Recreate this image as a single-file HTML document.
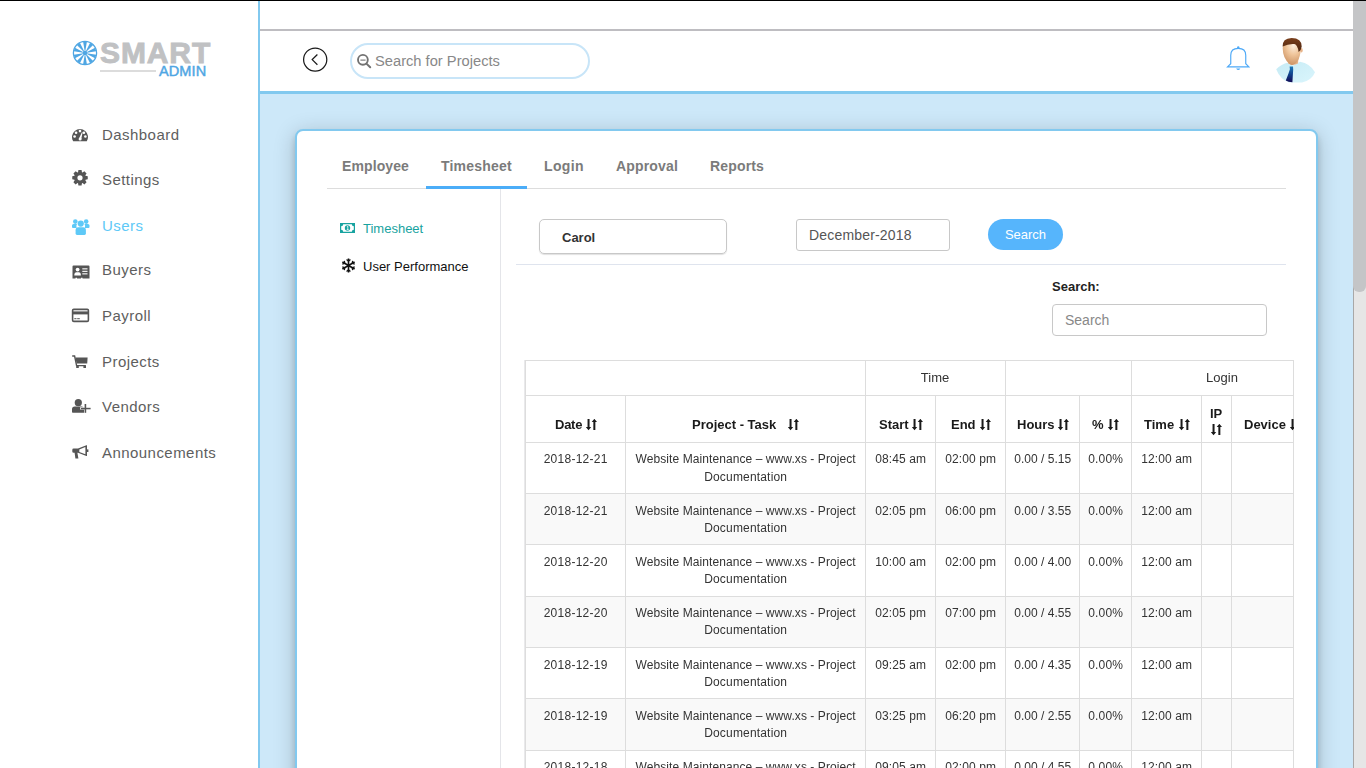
<!DOCTYPE html>
<html><head><meta charset="utf-8">
<style>
*{box-sizing:border-box;margin:0;padding:0}
html,body{width:1366px;height:768px;overflow:hidden;background:#fff;font-family:"Liberation Sans",sans-serif;color:#333}
.abs{position:absolute}
#topline{left:0;top:0;width:1366px;height:1px;background:#000}
#sb-track{left:1353px;top:1px;width:13px;height:767px;background:#e6e6e6;border-left:1px solid #a8a8a8}
#sb-thumb{left:1353px;top:1px;width:13px;height:291px;background:#c4c5c7;border-radius:0 0 6px 6px}
#sidebar{left:0;top:1px;width:258px;height:767px;background:#fff}
#sideline{left:258px;top:1px;width:2px;height:767px;background:#82c9ef}
#header{left:260px;top:1px;width:1093px;height:90px;background:#fff}
#hgray{left:260px;top:29px;width:1093px;height:2px;background:#bebdc1}
#hblue{left:260px;top:91px;width:1093px;height:3px;background:#82c9ef}
#mainbg{left:260px;top:94px;width:1093px;height:674px;background:#cde8f9}
#card{left:295px;top:129px;width:1023px;height:700px;background:#fff;border:2px solid #82c9ef;border-radius:8px;box-shadow:0 4px 22px rgba(0,0,0,.2),0 5px 6px rgba(0,0,0,.16)}
.menu{left:102px;font-size:15px;line-height:20px;color:#5e5e5e;letter-spacing:.45px;white-space:nowrap}

#smart{left:100px;top:35px;font-size:30px;font-weight:bold;color:#c0c1c3;letter-spacing:0.9px;line-height:36px;-webkit-text-stroke:0.9px #c0c1c3}
#logoline{left:100px;top:70px;width:56px;height:2px;background:#dcdcdc}
#admin{left:159px;top:63px;font-size:14.5px;color:#4fa6e3;line-height:16px;letter-spacing:0.1px;-webkit-text-stroke:0.45px #4fa6e3}
.menu.act{color:#5ec9f7}

#psearch{left:350px;top:43px;width:240px;height:36px;border:2px solid #c8e5f8;border-radius:18px;background:#fff}
#psearch-txt{left:375px;top:51px;font-size:14.7px;line-height:20px;color:#888;white-space:nowrap}

.tab{top:157px;font-size:14px;font-weight:bold;color:#7b7b7b;line-height:18px;white-space:nowrap}
#tabline{left:327px;top:188px;width:959px;height:1px;background:#dddddd}
#tabact{left:426px;top:186px;width:101px;height:3px;background:#4badf8}
#subvline{left:500px;top:189px;width:1px;height:600px;background:#e4e5e9}
.subnav{left:363px;font-size:13px;line-height:17px;white-space:nowrap}
#carol{left:539px;top:219px;width:188px;height:35px;border:1px solid #c8c8c8;border-radius:5px;box-shadow:0 1px 1px rgba(0,0,0,.12);font-size:13px;color:#333;padding:9px 0 0 22px;line-height:17px}
#month{left:796px;top:219px;width:154px;height:32px;border:1px solid #c8c8c8;border-radius:3px;font-size:14px;color:#555;padding:6px 0 0 12px;letter-spacing:.18px;line-height:18px}
#sbtn{left:988px;top:219px;width:75px;height:31px;border-radius:16px;background:#56b5fc;color:#fff;font-size:13px;line-height:31px;text-align:center}
#fline{left:516px;top:264px;width:770px;height:1px;background:#dfe4ee}
#slabel{left:1052px;top:278px;font-size:13px;font-weight:bold;color:#222;line-height:17px}
#sinput{left:1052px;top:304px;width:215px;height:32px;border:1px solid #c8c8c8;border-radius:4px;font-size:14px;color:#888;padding:6px 0 0 12px;line-height:18px}

#tclip{left:0;top:0;width:1294px;height:768px;overflow:hidden;will-change:transform}
.th1{top:369px;font-size:13px;line-height:17px;color:#333;text-align:center}
.th2{top:416px;font-size:13px;line-height:17px;font-weight:bold;color:#1a1a1a;white-space:nowrap}
.td{font-size:12px;line-height:17.1428px;color:#333;text-align:center;white-space:nowrap}
</style></head><body>
<div id="topline" class="abs"></div>
<div id="sidebar" class="abs"></div>

<svg class="abs" style="left:72px;top:40px" width="26" height="26" viewBox="72 40 26 26">
<circle cx="85" cy="53" r="11.6" fill="none" stroke="#4fa6e3" stroke-width="1.3"/>
<path fill="#4fa6e3" d="M85 53L83.12 41.76L86.88 41.76ZM85 53L90.09 42.80L93.13 45.01ZM85 53L95.11 47.74L96.27 51.31ZM85 53L96.27 54.69L95.11 58.26ZM85 53L93.13 60.99L90.09 63.20ZM85 53L86.88 64.24L83.12 64.24ZM85 53L79.91 63.20L76.87 60.99ZM85 53L74.89 58.26L73.73 54.69ZM85 53L73.73 51.31L74.89 47.74ZM85 53L76.87 45.01L79.91 42.80Z"/>
<circle cx="85" cy="53" r="2.2" fill="#4fa6e3"/>
</svg>
<div class="abs" id="smart">SMART</div>
<div class="abs" id="logoline"></div>
<div class="abs" id="admin">ADMIN</div>

<svg class="abs" style="left:72px;top:128px" width="17" height="14" viewBox="0 0 17 14">
<path fill="#555" d="M1.2 13.2 A8 8 0 1 1 14.8 13.2 Z"/>
<g fill="#fff"><circle cx="8" cy="3.1" r="1.3"/><circle cx="4.1" cy="4.7" r="1.3"/><circle cx="11.9" cy="4.7" r="1.3"/>
<circle cx="2.6" cy="8.5" r="1.3"/><circle cx="13.4" cy="8.5" r="1.3"/>
<path d="M7 10.6 L9.9 4.2 L10.6 4.5 L9.2 11.3Z"/><circle cx="8.1" cy="11" r="1.5"/></g>
</svg>
<svg class="abs" style="left:72px;top:170px" width="16" height="16" viewBox="0 0 16 16">
<path fill="#555" fill-rule="evenodd" d="M6.03 2.24 L6.43 0.06 L9.57 0.06 L9.97 2.24 L10.54 2.48 L12.36 1.22 L14.58 3.44 L13.32 5.26 L13.56 5.83 L15.74 6.23 L15.74 9.37 L13.56 9.77 L13.32 10.34 L14.58 12.16 L12.36 14.38 L10.54 13.12 L9.97 13.36 L9.57 15.54 L6.43 15.54 L6.03 13.36 L5.46 13.12 L3.64 14.38 L1.42 12.16 L2.68 10.34 L2.44 9.77 L0.26 9.37 L0.26 6.23 L2.44 5.83 L2.68 5.26 L1.42 3.44 L3.64 1.22 L5.46 2.48Z M8 5.2 A2.6 2.6 0 1 0 8 10.4 A2.6 2.6 0 1 0 8 5.2Z"/>
</svg>
<svg class="abs" style="left:72px;top:219px" width="18" height="17" viewBox="0 0 18 17">
<g fill="#5ec9f7">
<circle cx="3.3" cy="2.6" r="2.3"/><circle cx="14.2" cy="2.6" r="2.3"/>
<path d="M0 6.5 Q0 5 1.5 5 L5 5 Q4 6.5 4.6 9 L1 9 Q0 9 0 8Z"/>
<path d="M17.5 6.5 Q17.5 5 16 5 L12.5 5 Q13.5 6.5 12.9 9 L16.5 9 Q17.5 9 17.5 8Z"/>
<circle cx="8.75" cy="4.6" r="3.1"/>
<path d="M3.6 11.5 Q3.6 8.2 6.2 8.2 L11.3 8.2 Q13.9 8.2 13.9 11.5 L13.9 14.6 Q13.9 16 12.5 16 L5 16 Q3.6 16 3.6 14.6Z"/>
</g>
</svg>
<svg class="abs" style="left:72px;top:265px" width="18" height="15" viewBox="0 0 18 15">
<path fill="#555" d="M0.5 1.5 Q0.5 0.5 1.5 0.5 L16.5 0.5 Q17.5 0.5 17.5 1.5 L17.5 13.5 L10.5 13.5 L10.5 12.8 L9 12.8 L9 13.5 L5 13.5 L5 12.8 L3.5 12.8 L3.5 13.5 L0.5 13.5Z"/>
<g fill="#fff"><circle cx="5.6" cy="4.6" r="1.9"/><path d="M2.3 10.6 Q2.3 7.3 4.5 7.3 L6.7 7.3 Q8.9 7.3 8.9 10.6Z"/>
<rect x="10.3" y="3.3" width="5.2" height="1.1"/><rect x="10.3" y="5.8" width="5.2" height="1.1"/><rect x="10.3" y="8.3" width="5.2" height="1.1"/></g>
</svg>
<svg class="abs" style="left:71px;top:308px" width="19" height="15" viewBox="0 0 19 15">
<rect x="1.6" y="1.4" width="15.8" height="12" rx="1.2" fill="none" stroke="#555" stroke-width="1.6"/>
<rect x="1" y="3.4" width="17" height="3" fill="#555"/>
<rect x="3.3" y="10.2" width="2.2" height="1" fill="#555"/><rect x="6.2" y="10.2" width="2.6" height="1" fill="#555"/>
</svg>
<svg class="abs" style="left:72px;top:355px" width="16" height="14" viewBox="0 0 16 14">
<path fill="none" stroke="#555" stroke-width="1.4" d="M0.2 1 L2.6 1 L4.6 10.6 L13.6 10.6"/>
<path fill="#555" d="M3.4 2.6 L15.6 2.6 L15.2 8.4 L4.6 8.4Z"/>
<rect x="4.2" y="10.2" width="2.6" height="2.8" fill="#555"/><rect x="11.4" y="10.2" width="2.6" height="2.8" fill="#555"/>
</svg>
<svg class="abs" style="left:72px;top:399px" width="20" height="15" viewBox="0 0 20 15">
<circle cx="6.3" cy="3.7" r="3.6" fill="#555"/>
<path fill="#555" d="M0 10.2 Q0 7.4 2.8 7.4 L9.8 7.4 Q11.6 7.4 12 9 L12 13.8 L0.8 13.8 Q0 13.8 0 13Z"/>
<rect x="8.2" y="8.2" width="10.8" height="2.4" fill="#fff"/>
<rect x="12.1" y="4.6" width="2.4" height="9.6" fill="#fff"/>
<rect x="9" y="8.8" width="9.6" height="1.5" fill="#555"/>
<rect x="12.6" y="5" width="1.6" height="8.8" fill="#555"/>
</svg>
<svg class="abs" style="left:72px;top:445px" width="17" height="15" viewBox="0 0 17 15">
<path fill="#555" d="M0.3 5 Q0.3 3.6 1.6 3.6 L6 3.6 L14.4 0.3 L15 0.3 L15 11 L14.4 11 L6 7.8 L5.4 7.8 L6.4 13.6 L3.4 13.6 L2.6 7.8 L1.6 7.8 Q0.3 7.8 0.3 6.4Z"/>
<path fill="#fff" d="M7.3 4.4 L13.4 2.1 L13.4 9.2 L7.3 7Z"/>
<rect x="15" y="4.4" width="1.4" height="2.6" fill="#555"/>
</svg>
<div class="abs menu" style="top:125px">Dashboard</div>
<div class="abs menu" style="top:170px">Settings</div>
<div class="abs menu act" style="top:216px">Users</div>
<div class="abs menu" style="top:260px">Buyers</div>
<div class="abs menu" style="top:306px">Payroll</div>
<div class="abs menu" style="top:352px">Projects</div>
<div class="abs menu" style="top:397px">Vendors</div>
<div class="abs menu" style="top:443px">Announcements</div>
<div id="sideline" class="abs"></div>
<div id="header" class="abs"></div>
<div id="hgray" class="abs"></div>
<div id="hblue" class="abs"></div>

<svg class="abs" style="left:300px;top:45px" width="30" height="30" viewBox="300 45 30 30">
<circle cx="315.2" cy="59.6" r="11.6" fill="none" stroke="#1a1a1a" stroke-width="1.25"/>
<path d="M317.4 54.5 L312.2 59.6 L317.4 64.7" fill="none" stroke="#1a1a1a" stroke-width="1.25"/>
</svg>
<div class="abs" id="psearch"></div>
<svg class="abs" style="left:354px;top:50px" width="20" height="20" viewBox="354 50 20 20">
<circle cx="362.9" cy="59.8" r="4.9" fill="none" stroke="#727272" stroke-width="1.9"/>
<path d="M360.4 60.1 L365.6 60.1" stroke="#666" stroke-width="1"/>
<path d="M366.4 63.6 L370.2 67.3" stroke="#727272" stroke-width="2" stroke-linecap="round"/>
</svg>
<div class="abs" id="psearch-txt">Search for Projects</div>
<svg class="abs" style="left:1226px;top:45px" width="24" height="27" viewBox="0 0 24 27">
<g fill="none" stroke="#4da9f7" stroke-width="1.15">
<path d="M4.75 18.7 L4.75 10.2 Q4.75 3.3 12.25 3.3 Q19.75 3.3 19.75 10.2 L19.75 18.7 L22.9 21.9 L1.5 21.9 Z"/>
</g>
<circle cx="12.25" cy="2.5" r="1.2" fill="#4da9f7"/>
<path d="M10.1 23.4 L14.4 23.4 Q12.25 26.4 10.1 23.4Z" fill="#4da9f7"/>
</svg>
<svg class="abs" style="left:1274px;top:36px" width="44" height="48" viewBox="0 0 44 48">
<defs>
<linearGradient id="shirt" x1="0" y1="0" x2="1" y2="1"><stop offset="0" stop-color="#c6ebf5"/><stop offset="1" stop-color="#daf5fc"/></linearGradient>
<radialGradient id="skin" cx="0.6" cy="0.2" r="0.85"><stop offset="0" stop-color="#fdf0e2"/><stop offset="0.45" stop-color="#f0c69c"/><stop offset="1" stop-color="#c98e5e"/></radialGradient>
<linearGradient id="hair" x1="0" y1="0" x2="0" y2="1"><stop offset="0" stop-color="#7a3f1c"/><stop offset="1" stop-color="#4a2410"/></linearGradient>
<linearGradient id="tie" x1="0" y1="0" x2="0" y2="1"><stop offset="0" stop-color="#1d7ab8"/><stop offset="0.5" stop-color="#0f3f8a"/><stop offset="1" stop-color="#120a55"/></linearGradient>
</defs>
<path fill="url(#shirt)" d="M2.2 33.2 Q7 28.4 13.2 26.8 L19 29.5 L26 25.8 Q36 27.5 41 36.2 Q38 44 28 46.6 L15 46.6 Q6 43 2.2 33.2Z"/>
<path fill="#e6b489" d="M13.5 22 L24.5 22 L24 27.5 Q19 30 14 27.5Z"/>
<path fill="url(#skin)" d="M8.7 12.5 Q8.5 4.2 17.6 4 Q26.8 4 26.7 12.5 Q26.6 21 23 26 Q19 31 15.4 27.8 Q8.9 22.5 8.7 12.5Z"/><ellipse cx="27.4" cy="14.2" rx="1.3" ry="2.2" fill="#e8b48a"/>
<path fill="url(#hair)" d="M8.6 10.6 Q8.2 2.3 17.6 1.9 Q27.8 2 27.7 10.5 Q27.4 13.8 24.6 16 Q24.2 12.2 22.8 10 Q21.6 8.2 20.3 8.1 Q14.5 7.6 8.6 10.6Z"/>
<path fill="url(#tie)" d="M15.6 30.6 L19 30.6 L19.2 33.5 Q18.8 40 18.4 46.2 Q14 46 11.8 44.4 Q14.5 38 15.9 33.2Z"/>
</svg>
<div id="mainbg" class="abs"></div>
<div id="card" class="abs"></div>

<div class="abs tab" style="left:342px;letter-spacing:0.108px">Employee</div>
<div class="abs tab" style="left:441px;letter-spacing:0.195px">Timesheet</div>
<div class="abs tab" style="left:544px;letter-spacing:0.381px">Login</div>
<div class="abs tab" style="left:616px;letter-spacing:0.166px">Approval</div>
<div class="abs tab" style="left:710px;letter-spacing:0.158px">Reports</div>
<div class="abs" id="tabline"></div>
<div class="abs" id="tabact"></div>
<div class="abs" id="subvline"></div>
<svg class="abs" style="left:339px;top:222px" width="17" height="12" viewBox="0 0 17 12">
<path fill="#17a3a0" fill-rule="evenodd" d="M1 1 H16 V11 H1Z M4.2 2.3 H12.8 A2 2 0 0 0 14.8 4.3 V7.7 A2 2 0 0 0 12.8 9.7 H4.2 A2 2 0 0 0 2.2 7.7 V4.3 A2 2 0 0 0 4.2 2.3Z"/>
<circle cx="8.5" cy="6" r="2.7" fill="#17a3a0"/>
<path d="M7.9 4.7 L8.8 4.3 L8.8 7.6 M7.8 7.6 H9.6" stroke="#fff" stroke-width="0.8" fill="none"/>
</svg>
<div class="abs subnav" style="top:220px;color:#17a3a0">Timesheet</div>
<svg class="abs" style="left:341px;top:258px" width="15" height="15" viewBox="-7 -7 14 14">
<g stroke="#111" stroke-width="1.5" fill="none">
<path d="M0 -6.6 L0 6.6 M-5.7 -3.3 L5.7 3.3 M-5.7 3.3 L5.7 -3.3"/>
</g>
<g stroke="#111" stroke-width="1.2" fill="none">
<path d="M-1.8 -5.6 L0 -4 L1.8 -5.6 M-1.8 5.6 L0 4 L1.8 5.6"/>
<path d="M-5.8 -1.2 L-3.5 -2 L-3.9 -4.3 M5.8 1.2 L3.5 2 L3.9 4.3"/>
<path d="M-5.8 1.2 L-3.5 2 L-3.9 4.3 M5.8 -1.2 L3.5 -2 L3.9 -4.3"/>
</g>
</svg>
<div class="abs subnav" style="top:258px;color:#111">User Performance</div>
<div class="abs" id="carol"><b>Carol</b></div>
<div class="abs" id="month">December-2018</div>
<div class="abs" id="sbtn">Search</div>
<div class="abs" id="fline"></div>
<div class="abs" id="slabel">Search:</div>
<div class="abs" id="sinput">Search</div>
<div class="abs" id="tclip"><div class="abs" style="left:525px;top:494px;width:768px;height:50px;background:#f9f9f9"></div>
<div class="abs" style="left:525px;top:597px;width:768px;height:50px;background:#f9f9f9"></div>
<div class="abs" style="left:525px;top:699px;width:768px;height:51px;background:#f9f9f9"></div>
<div class="abs" style="left:525px;top:360px;width:768px;height:1px;background:#dddddd"></div>
<div class="abs" style="left:525px;top:395px;width:768px;height:1px;background:#dddddd"></div>
<div class="abs" style="left:525px;top:442px;width:768px;height:1px;background:#dddddd"></div>
<div class="abs" style="left:525px;top:493px;width:768px;height:1px;background:#dddddd"></div>
<div class="abs" style="left:525px;top:544px;width:768px;height:1px;background:#dddddd"></div>
<div class="abs" style="left:525px;top:596px;width:768px;height:1px;background:#dddddd"></div>
<div class="abs" style="left:525px;top:647px;width:768px;height:1px;background:#dddddd"></div>
<div class="abs" style="left:525px;top:698px;width:768px;height:1px;background:#dddddd"></div>
<div class="abs" style="left:525px;top:750px;width:768px;height:1px;background:#dddddd"></div>
<div class="abs" style="left:524px;top:360px;width:1px;height:408px;background:#e9e9eb"></div>
<div class="abs" style="left:525px;top:360px;width:1px;height:408px;background:#dddddd"></div>
<div class="abs" style="left:1293px;top:360px;width:1px;height:408px;background:#dddddd"></div>
<div class="abs" style="left:865px;top:360px;width:1px;height:35px;background:#dddddd"></div>
<div class="abs" style="left:1005px;top:360px;width:1px;height:35px;background:#dddddd"></div>
<div class="abs" style="left:1131px;top:360px;width:1px;height:35px;background:#dddddd"></div>
<div class="abs" style="left:625px;top:395px;width:1px;height:373px;background:#dddddd"></div>
<div class="abs" style="left:865px;top:395px;width:1px;height:373px;background:#dddddd"></div>
<div class="abs" style="left:935px;top:395px;width:1px;height:373px;background:#dddddd"></div>
<div class="abs" style="left:1005px;top:395px;width:1px;height:373px;background:#dddddd"></div>
<div class="abs" style="left:1079px;top:395px;width:1px;height:373px;background:#dddddd"></div>
<div class="abs" style="left:1131px;top:395px;width:1px;height:373px;background:#dddddd"></div>
<div class="abs" style="left:1201px;top:395px;width:1px;height:373px;background:#dddddd"></div>
<div class="abs" style="left:1231px;top:395px;width:1px;height:373px;background:#dddddd"></div>
<div class="abs th1" style="left:865px;width:140px">Time</div>
<div class="abs th1" style="left:1132px;width:180px">Login</div>
<div class="abs th2" style="left:555px;letter-spacing:-0.25px">Date</div>
<svg class="abs" style="left:586px;top:419px" width="11" height="12" viewBox="0 0 11 12"><path fill="#1a1a1a" d="M1.55 0 L3.55 0 L3.55 8.1 L5.2 8.1 L2.55 11.3 L-0.1 8.1 L1.55 8.1Z M7.35 11 L9.35 11 L9.35 3.0 L11 3.0 L8.35 -0.2 L5.7 3.0 L7.35 3.0Z"/></svg>
<div class="abs th2" style="left:692px">Project - Task</div>
<svg class="abs" style="left:788px;top:419px" width="11" height="12" viewBox="0 0 11 12"><path fill="#1a1a1a" d="M1.55 0 L3.55 0 L3.55 8.1 L5.2 8.1 L2.55 11.3 L-0.1 8.1 L1.55 8.1Z M7.35 11 L9.35 11 L9.35 3.0 L11 3.0 L8.35 -0.2 L5.7 3.0 L7.35 3.0Z"/></svg>
<div class="abs th2" style="left:879px">Start</div>
<svg class="abs" style="left:912px;top:419px" width="11" height="12" viewBox="0 0 11 12"><path fill="#1a1a1a" d="M1.55 0 L3.55 0 L3.55 8.1 L5.2 8.1 L2.55 11.3 L-0.1 8.1 L1.55 8.1Z M7.35 11 L9.35 11 L9.35 3.0 L11 3.0 L8.35 -0.2 L5.7 3.0 L7.35 3.0Z"/></svg>
<div class="abs th2" style="left:951px">End</div>
<svg class="abs" style="left:980px;top:419px" width="11" height="12" viewBox="0 0 11 12"><path fill="#1a1a1a" d="M1.55 0 L3.55 0 L3.55 8.1 L5.2 8.1 L2.55 11.3 L-0.1 8.1 L1.55 8.1Z M7.35 11 L9.35 11 L9.35 3.0 L11 3.0 L8.35 -0.2 L5.7 3.0 L7.35 3.0Z"/></svg>
<div class="abs th2" style="left:1017px">Hours</div>
<svg class="abs" style="left:1058px;top:419px" width="11" height="12" viewBox="0 0 11 12"><path fill="#1a1a1a" d="M1.55 0 L3.55 0 L3.55 8.1 L5.2 8.1 L2.55 11.3 L-0.1 8.1 L1.55 8.1Z M7.35 11 L9.35 11 L9.35 3.0 L11 3.0 L8.35 -0.2 L5.7 3.0 L7.35 3.0Z"/></svg>
<div class="abs th2" style="left:1092px">%</div>
<svg class="abs" style="left:1108px;top:419px" width="11" height="12" viewBox="0 0 11 12"><path fill="#1a1a1a" d="M1.55 0 L3.55 0 L3.55 8.1 L5.2 8.1 L2.55 11.3 L-0.1 8.1 L1.55 8.1Z M7.35 11 L9.35 11 L9.35 3.0 L11 3.0 L8.35 -0.2 L5.7 3.0 L7.35 3.0Z"/></svg>
<div class="abs th2" style="left:1144px">Time</div>
<svg class="abs" style="left:1179px;top:419px" width="11" height="12" viewBox="0 0 11 12"><path fill="#1a1a1a" d="M1.55 0 L3.55 0 L3.55 8.1 L5.2 8.1 L2.55 11.3 L-0.1 8.1 L1.55 8.1Z M7.35 11 L9.35 11 L9.35 3.0 L11 3.0 L8.35 -0.2 L5.7 3.0 L7.35 3.0Z"/></svg>
<div class="abs th2" style="left:1210px;top:405px">IP</div>
<svg class="abs" style="left:1211px;top:424px" width="11" height="12" viewBox="0 0 11 12"><path fill="#1a1a1a" d="M1.55 0 L3.55 0 L3.55 8.1 L5.2 8.1 L2.55 11.3 L-0.1 8.1 L1.55 8.1Z M7.35 11 L9.35 11 L9.35 3.0 L11 3.0 L8.35 -0.2 L5.7 3.0 L7.35 3.0Z"/></svg>
<div class="abs th2" style="left:1244px">Device</div>
<svg class="abs" style="left:1290px;top:419px" width="11" height="12" viewBox="0 0 11 12"><path fill="#1a1a1a" d="M1.55 0 L3.55 0 L3.55 8.1 L5.2 8.1 L2.55 11.3 L-0.1 8.1 L1.55 8.1Z M7.35 11 L9.35 11 L9.35 3.0 L11 3.0 L8.35 -0.2 L5.7 3.0 L7.35 3.0Z"/></svg>
<div class="abs td" style="left:525.7px;width:100px;top:451.40px;letter-spacing:0.262px">2018-12-21</div>
<div class="abs td" style="left:625.7px;width:240px;top:451.40px;letter-spacing:0.077px">Website Maintenance – www.xs - Project</div>
<div class="abs td" style="left:625.7px;width:240px;top:468.54px;letter-spacing:0.176px">Documentation</div>
<div class="abs td" style="left:865.7px;width:70px;top:451.40px;letter-spacing:0.121px">08:45 am</div>
<div class="abs td" style="left:935.7px;width:70px;top:451.40px;letter-spacing:0.121px">02:00 pm</div>
<div class="abs td" style="left:1005.7px;width:74px;top:451.40px;letter-spacing:0.026px">0.00 / 5.15</div>
<div class="abs td" style="left:1079.7px;width:52px;top:451.40px;letter-spacing:0.195px">0.00%</div>
<div class="abs td" style="left:1131.7px;width:70px;top:451.40px;letter-spacing:0.121px">12:00 am</div>
<div class="abs td" style="left:525.7px;width:100px;top:502.73px;letter-spacing:0.262px">2018-12-21</div>
<div class="abs td" style="left:625.7px;width:240px;top:502.73px;letter-spacing:0.077px">Website Maintenance – www.xs - Project</div>
<div class="abs td" style="left:625.7px;width:240px;top:519.88px;letter-spacing:0.176px">Documentation</div>
<div class="abs td" style="left:865.7px;width:70px;top:502.73px;letter-spacing:0.121px">02:05 pm</div>
<div class="abs td" style="left:935.7px;width:70px;top:502.73px;letter-spacing:0.121px">06:00 pm</div>
<div class="abs td" style="left:1005.7px;width:74px;top:502.73px;letter-spacing:0.026px">0.00 / 3.55</div>
<div class="abs td" style="left:1079.7px;width:52px;top:502.73px;letter-spacing:0.195px">0.00%</div>
<div class="abs td" style="left:1131.7px;width:70px;top:502.73px;letter-spacing:0.121px">12:00 am</div>
<div class="abs td" style="left:525.7px;width:100px;top:554.07px;letter-spacing:0.262px">2018-12-20</div>
<div class="abs td" style="left:625.7px;width:240px;top:554.07px;letter-spacing:0.077px">Website Maintenance – www.xs - Project</div>
<div class="abs td" style="left:625.7px;width:240px;top:571.21px;letter-spacing:0.176px">Documentation</div>
<div class="abs td" style="left:865.7px;width:70px;top:554.07px;letter-spacing:0.121px">10:00 am</div>
<div class="abs td" style="left:935.7px;width:70px;top:554.07px;letter-spacing:0.121px">02:00 pm</div>
<div class="abs td" style="left:1005.7px;width:74px;top:554.07px;letter-spacing:0.026px">0.00 / 4.00</div>
<div class="abs td" style="left:1079.7px;width:52px;top:554.07px;letter-spacing:0.195px">0.00%</div>
<div class="abs td" style="left:1131.7px;width:70px;top:554.07px;letter-spacing:0.121px">12:00 am</div>
<div class="abs td" style="left:525.7px;width:100px;top:605.40px;letter-spacing:0.262px">2018-12-20</div>
<div class="abs td" style="left:625.7px;width:240px;top:605.40px;letter-spacing:0.077px">Website Maintenance – www.xs - Project</div>
<div class="abs td" style="left:625.7px;width:240px;top:621.54px;letter-spacing:0.176px">Documentation</div>
<div class="abs td" style="left:865.7px;width:70px;top:605.40px;letter-spacing:0.121px">02:05 pm</div>
<div class="abs td" style="left:935.7px;width:70px;top:605.40px;letter-spacing:0.121px">07:00 pm</div>
<div class="abs td" style="left:1005.7px;width:74px;top:605.40px;letter-spacing:0.026px">0.00 / 4.55</div>
<div class="abs td" style="left:1079.7px;width:52px;top:605.40px;letter-spacing:0.195px">0.00%</div>
<div class="abs td" style="left:1131.7px;width:70px;top:605.40px;letter-spacing:0.121px">12:00 am</div>
<div class="abs td" style="left:525.7px;width:100px;top:656.73px;letter-spacing:0.262px">2018-12-19</div>
<div class="abs td" style="left:625.7px;width:240px;top:656.73px;letter-spacing:0.077px">Website Maintenance – www.xs - Project</div>
<div class="abs td" style="left:625.7px;width:240px;top:673.88px;letter-spacing:0.176px">Documentation</div>
<div class="abs td" style="left:865.7px;width:70px;top:656.73px;letter-spacing:0.121px">09:25 am</div>
<div class="abs td" style="left:935.7px;width:70px;top:656.73px;letter-spacing:0.121px">02:00 pm</div>
<div class="abs td" style="left:1005.7px;width:74px;top:656.73px;letter-spacing:0.026px">0.00 / 4.35</div>
<div class="abs td" style="left:1079.7px;width:52px;top:656.73px;letter-spacing:0.195px">0.00%</div>
<div class="abs td" style="left:1131.7px;width:70px;top:656.73px;letter-spacing:0.121px">12:00 am</div>
<div class="abs td" style="left:525.7px;width:100px;top:708.07px;letter-spacing:0.262px">2018-12-19</div>
<div class="abs td" style="left:625.7px;width:240px;top:708.07px;letter-spacing:0.077px">Website Maintenance – www.xs - Project</div>
<div class="abs td" style="left:625.7px;width:240px;top:725.21px;letter-spacing:0.176px">Documentation</div>
<div class="abs td" style="left:865.7px;width:70px;top:708.07px;letter-spacing:0.121px">03:25 pm</div>
<div class="abs td" style="left:935.7px;width:70px;top:708.07px;letter-spacing:0.121px">06:20 pm</div>
<div class="abs td" style="left:1005.7px;width:74px;top:708.07px;letter-spacing:0.026px">0.00 / 2.55</div>
<div class="abs td" style="left:1079.7px;width:52px;top:708.07px;letter-spacing:0.195px">0.00%</div>
<div class="abs td" style="left:1131.7px;width:70px;top:708.07px;letter-spacing:0.121px">12:00 am</div>
<div class="abs td" style="left:525.7px;width:100px;top:759.40px;letter-spacing:0.262px">2018-12-18</div>
<div class="abs td" style="left:625.7px;width:240px;top:759.40px;letter-spacing:0.077px">Website Maintenance – www.xs - Project</div>
<div class="abs td" style="left:625.7px;width:240px;top:776.54px;letter-spacing:0.176px">Documentation</div>
<div class="abs td" style="left:865.7px;width:70px;top:759.40px;letter-spacing:0.121px">09:05 am</div>
<div class="abs td" style="left:935.7px;width:70px;top:759.40px;letter-spacing:0.121px">02:00 pm</div>
<div class="abs td" style="left:1005.7px;width:74px;top:759.40px;letter-spacing:0.026px">0.00 / 4.55</div>
<div class="abs td" style="left:1079.7px;width:52px;top:759.40px;letter-spacing:0.195px">0.00%</div>
<div class="abs td" style="left:1131.7px;width:70px;top:759.40px;letter-spacing:0.121px">12:00 am</div></div>
<div id="sb-track" class="abs"></div>
<div id="sb-thumb" class="abs"></div>
</body></html>
